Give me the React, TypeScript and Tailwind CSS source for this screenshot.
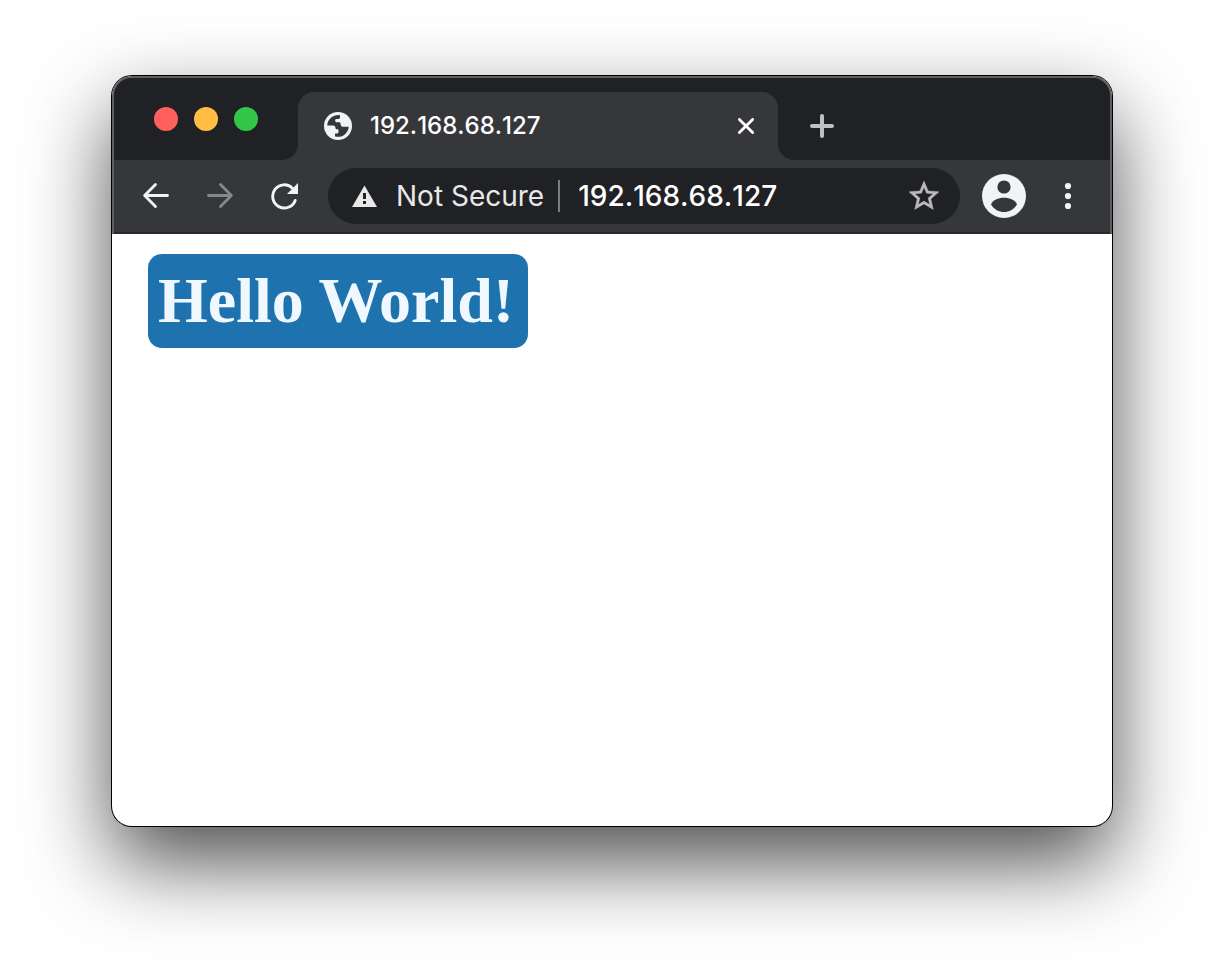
import { useState } from "react";

const lights = [
  { label: "Close window", color: "bg-[#ff605c]" },
  { label: "Minimize window", color: "bg-[#ffbd44]" },
  { label: "Zoom window", color: "bg-[#32c748]" },
];

function GlobeIcon() {
  return (
    <svg viewBox="0 0 28 28" className="size-7 shrink-0" aria-hidden="true">
      <circle cx="14" cy="14" r="14" fill="#f1f3f4" />
      <path
        d="M3.200 13.600A10.800 10.800 0 0 1 16 3.300V5.200c0 1-.8 1.800-1.800 1.800h-1.700c-.8 0-1.300.6-1.300 1.300v.8c0 .7.500 1.200 1.200 1.200h2.800c.8 0 1.400.6 1.400 1.400v.9c0 1.200 1 2.200 2.200 2.200h6A10.800 10.800 0 0 1 11 24.400v-2.800h1.700c1 0 1.800-.8 1.800-1.800v-1.500c0-.6-.5-1-1-1h-.6c-.8 0-1.400-.6-1.400-1.400 0-1.300-1-2.300-2.300-2.300z"
        fill="#36373b"
      />
    </svg>
  );
}

function ArrowIcon({ className = "" }: { className?: string }) {
  return (
    <svg viewBox="0 0 28 28" className={`size-7 ${className}`} fill="none" stroke="currentColor" strokeWidth="2.800" strokeLinecap="round" strokeLinejoin="round" aria-hidden="true">
      <path d="M25.500 13.500H3M13.500 2.400L2.600 13.500l10.900 11" />
    </svg>
  );
}

function ReloadIcon() {
  return (
    <svg viewBox="0 0 28 28" className="size-7" aria-hidden="true">
      <path d="M25.200 18.400A11.600 11.600 0 1 1 22.500 6.200" fill="none" stroke="currentColor" strokeWidth="2.900" strokeLinecap="round" />
      <path d="M28 1v11H17z" fill="currentColor" />
    </svg>
  );
}

export default function App() {
  const [url, setUrl] = useState("192.168.68.127");

  return (
    <div className="flex min-h-screen flex-col bg-white px-28 pt-[76px] pb-[148px] font-['Inter',sans-serif]">
      <div className="flex flex-1 flex-col rounded-[20px] bg-white shadow-[0_0_0_1px_#000,0_36px_84px_rgba(0,0,0,0.7)]">
        <header className="overflow-hidden rounded-t-[20px] border-x-2 border-t-2 border-[#5f5f62] bg-[#36373b]">
          {/* tab strip */}
          <div className="flex h-[82px]">
            <div className="flex w-[184px] shrink-0 items-center gap-4 rounded-br-2xl bg-[#202124] pl-10">
              {lights.map((l) => (
                <button key={l.label} aria-label={l.label} className={`size-6 rounded-full ${l.color}`} />
              ))}
            </div>
            <div className="w-[480px] min-w-0 bg-[#202124] pt-3.5">
              <div className="flex h-full items-center rounded-t-2xl bg-[#36373b] pr-6 pl-[26px]">
                <GlobeIcon />
                <span className="ml-[18px] flex-1 truncate text-2xl font-medium text-white [font-kerning:none]">192.168.68.127</span>
                <button aria-label="Close tab" className="text-white">
                  <svg viewBox="0 0 16 16" className="size-4" stroke="currentColor" strokeWidth="2.800" strokeLinecap="round" aria-hidden="true">
                    <path d="M1.400 1.400l13.200 13.200M14.600 1.400L1.400 14.600" />
                  </svg>
                </button>
              </div>
            </div>
            <div className="flex flex-1 items-center rounded-bl-2xl bg-[#202124] pt-3.5 pl-8">
              <button aria-label="New tab" className="text-[#bdc1c6]">
                <svg viewBox="0 0 24 24" className="size-6" stroke="currentColor" strokeWidth="4" strokeLinecap="round" aria-hidden="true">
                  <path d="M12 2v20M2 12h20" />
                </svg>
              </button>
            </div>
          </div>

          {/* toolbar */}
          <div className="flex items-center gap-[22px] border-b-2 border-[#292a2d] px-[22px] py-2">
            <div className="flex min-w-0 flex-1 items-center gap-6 text-[#f1f3f4]">
              <button aria-label="Back" className="flex size-10 items-center justify-center">
                <ArrowIcon />
              </button>
              <button aria-label="Forward" disabled className="flex size-10 items-center justify-center text-[#87888a]">
                <ArrowIcon className="-scale-x-100" />
              </button>
              <button aria-label="Reload" className="flex size-10 items-center justify-center">
                <ReloadIcon />
              </button>
              <div className="flex h-14 min-w-0 flex-1 items-center rounded-full bg-[#202124] pr-[18px] pl-[22px]">
                <button className="flex shrink-0 items-center gap-[18px] text-[28px] leading-8 text-[#e8e8e8]">
                  <svg viewBox="0 0 28 28" className="size-7" aria-hidden="true">
                    <path d="M14.500 3.500L27 25H2z" fill="currentColor" />
                    <path d="M13 11h3v6h-3zM13 19h3v3h-3z" fill="#202124" />
                  </svg>
                  Not Secure
                </button>
                <div className="ml-3.5 h-8 w-0.5 bg-[#7b7c7f]" />
                <input
                  aria-label="Address"
                  value={url}
                  onChange={(e) => setUrl(e.target.value)}
                  className="ml-[18px] h-8 min-w-0 flex-1 bg-transparent text-[28px] leading-8 font-medium text-white outline-none [font-kerning:none]"
                />
                <button aria-label="Bookmark this tab" className="text-[#bababa]">
                  <svg viewBox="0 0 24 24" className="size-9" fill="currentColor" stroke="currentColor" strokeWidth="0.300" aria-hidden="true">
                    <path d="M22 9.240l-7.190-.62L12 2 9.190 8.630 2 9.240l5.460 4.730L5.820 21 12 17.270 18.180 21l-1.630-7.030L22 9.240zM12 15.400l-3.760 2.270 1-4.280-3.320-2.880 4.380-.38L12 6.100l1.710 4.040 4.380.38-3.320 2.880 1 4.280L12 15.400z" />
                  </svg>
                </button>
              </div>
            </div>
            <button aria-label="Profile" className="text-[#f1f3f4]">
              <svg viewBox="0 0 44 44" className="size-11" aria-hidden="true">
                <circle cx="22" cy="22" r="22" fill="currentColor" />
                <circle cx="22" cy="13" r="6.600" fill="#36373b" />
                <path d="M9 30.500C11 26 16 23.800 22 23.800S33 26 35 30.500C32 35.500 27 38 22 38S12 35.500 9 30.500z" fill="#36373b" />
              </svg>
            </button>
            <button aria-label="Menu" className="flex size-10 items-center justify-center text-[#f1f3f4]">
              <svg viewBox="0 0 28 28" className="size-7" fill="currentColor" aria-hidden="true">
                <circle cx="14" cy="4" r="3.100" />
                <circle cx="14" cy="14" r="3.100" />
                <circle cx="14" cy="24" r="3.100" />
              </svg>
            </button>
          </div>
        </header>

        <main className="flex flex-1 items-start px-9 py-5">
          <h1 className="rounded-[14px] bg-[#1e73ae] py-2.5 pr-3.5 pl-2.5 font-['Liberation_Serif',serif] text-[64px] leading-[74px] font-bold text-[#f0f8ff]">
            Hello World!
          </h1>
        </main>
      </div>
    </div>
  );
}
